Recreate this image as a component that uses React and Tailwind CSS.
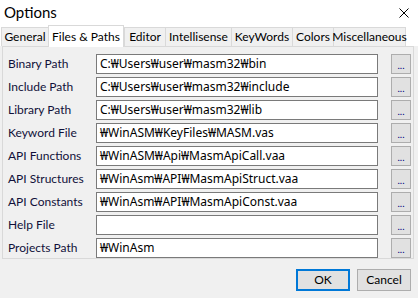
const rows = [
  { label: "Binary Path", value: "C:₩Users₩user₩masm32₩bin" },
  { label: "Include Path", value: "C:₩Users₩user₩masm32₩include" },
  { label: "Library Path", value: "C:₩Users₩user₩masm32₩lib" },
  { label: "Keyword File", value: "₩WinASM₩KeyFiles₩MASM.vas" },
  { label: "API Functions", value: "₩WinASM₩Api₩MasmApiCall.vaa" },
  { label: "API Structures", value: "₩WinAsm₩API₩MasmApiStruct.vaa" },
  { label: "API Constants", value: "₩WinAsm₩API₩MasmApiConst.vaa" },
  { label: "Help File", value: "" },
  { label: "Projects Path", value: "₩WinAsm" },
];

const tabs = [
  { name: "General", w: "w-[47px]" },
  { name: "Files & Paths", w: "w-[76px]", active: true },
  { name: "Editor", w: "w-[41px]" },
  { name: "Intellisense", w: "w-[66px]" },
  { name: "KeyWords", w: "w-[61px]" },
  { name: "Colors", w: "w-[41px]" },
  { name: "Miscellaneous", w: "w-[73px]", last: true },
];

const App = () => {
  return (
    <div
      className="w-[418px] h-[298px] bg-[#f0f0f0] flex flex-col overflow-hidden text-[#000]"
      style={{ fontFamily: 'Lato, "Noto Sans", sans-serif' }}
    >
      {/* title bar */}
      <div className="h-[25px] bg-white flex items-center justify-between pl-[4px] pr-[9px]">
        <span className="text-[15px] leading-none">Options</span>
        <svg width="10" height="10" viewBox="0 0 10 10">
          <path d="M0.5 0.5 L9.5 9.5 M9.5 0.5 L0.5 9.5" stroke="#000" strokeWidth="1" />
        </svg>
      </div>

      {/* tabs */}
      <div className="h-[21px] flex items-end pl-[1px] bg-white">
        {tabs.map((t) =>
          t.active ? (
            <div
              key={t.name}
              className={`${t.w} h-[22px] -mb-[1px] relative z-10 bg-white border-t border-l border-r border-[#d9d9d9] flex items-start justify-center pt-[2px] text-[12px]`}
            >
              {t.name}
            </div>
          ) : (
            <div
              key={t.name}
              className={`${t.w} h-[19px] bg-[#f0f0f0] border-t border-l border-[#d9d9d9] ${
                t.last ? "border-r" : ""
              } flex items-center justify-center text-[12px]`}
            >
              {t.name}
            </div>
          )
        )}
      </div>

      {/* panel */}
      <div className="ml-[2px] w-[412px] h-[213px] border border-[#d9d9d9] bg-[#f0f0f0] pt-[7px] pl-[5px] flex flex-col gap-[3px]">
        {rows.map((r) => (
          <div key={r.label} className="flex items-center h-[20px]">
            <div className="w-[88px] text-[12px] text-[#10103a]">{r.label}</div>
            <div
              className="w-[282px] h-[20px] bg-white border border-[#7a7a7a] flex items-center pl-[3px] text-[12px] whitespace-nowrap overflow-hidden"
              style={{ fontFamily: '"Noto Sans", sans-serif' }}
            >
              {r.value}
            </div>
            <button className="ml-[13px] w-[20px] h-[20px] bg-[#e1e1e1] border border-[#adadad] flex items-end justify-center pb-[3px] text-[10px] leading-none text-[#000080]">
              ...
            </button>
          </div>
        ))}
      </div>

      {/* bottom buttons */}
      <div className="flex justify-end gap-[7px] pr-[7px] pt-[10px]">
        <button className="w-[54px] h-[22px] bg-[#e1e1e1] border-2 border-[#0078d7] text-[12px] flex items-center justify-center">
          OK
        </button>
        <button className="w-[54px] h-[22px] bg-[#e1e1e1] border border-[#adadad] text-[12px] flex items-center justify-center">
          Cancel
        </button>
      </div>
    </div>
  );
};

export default App;
